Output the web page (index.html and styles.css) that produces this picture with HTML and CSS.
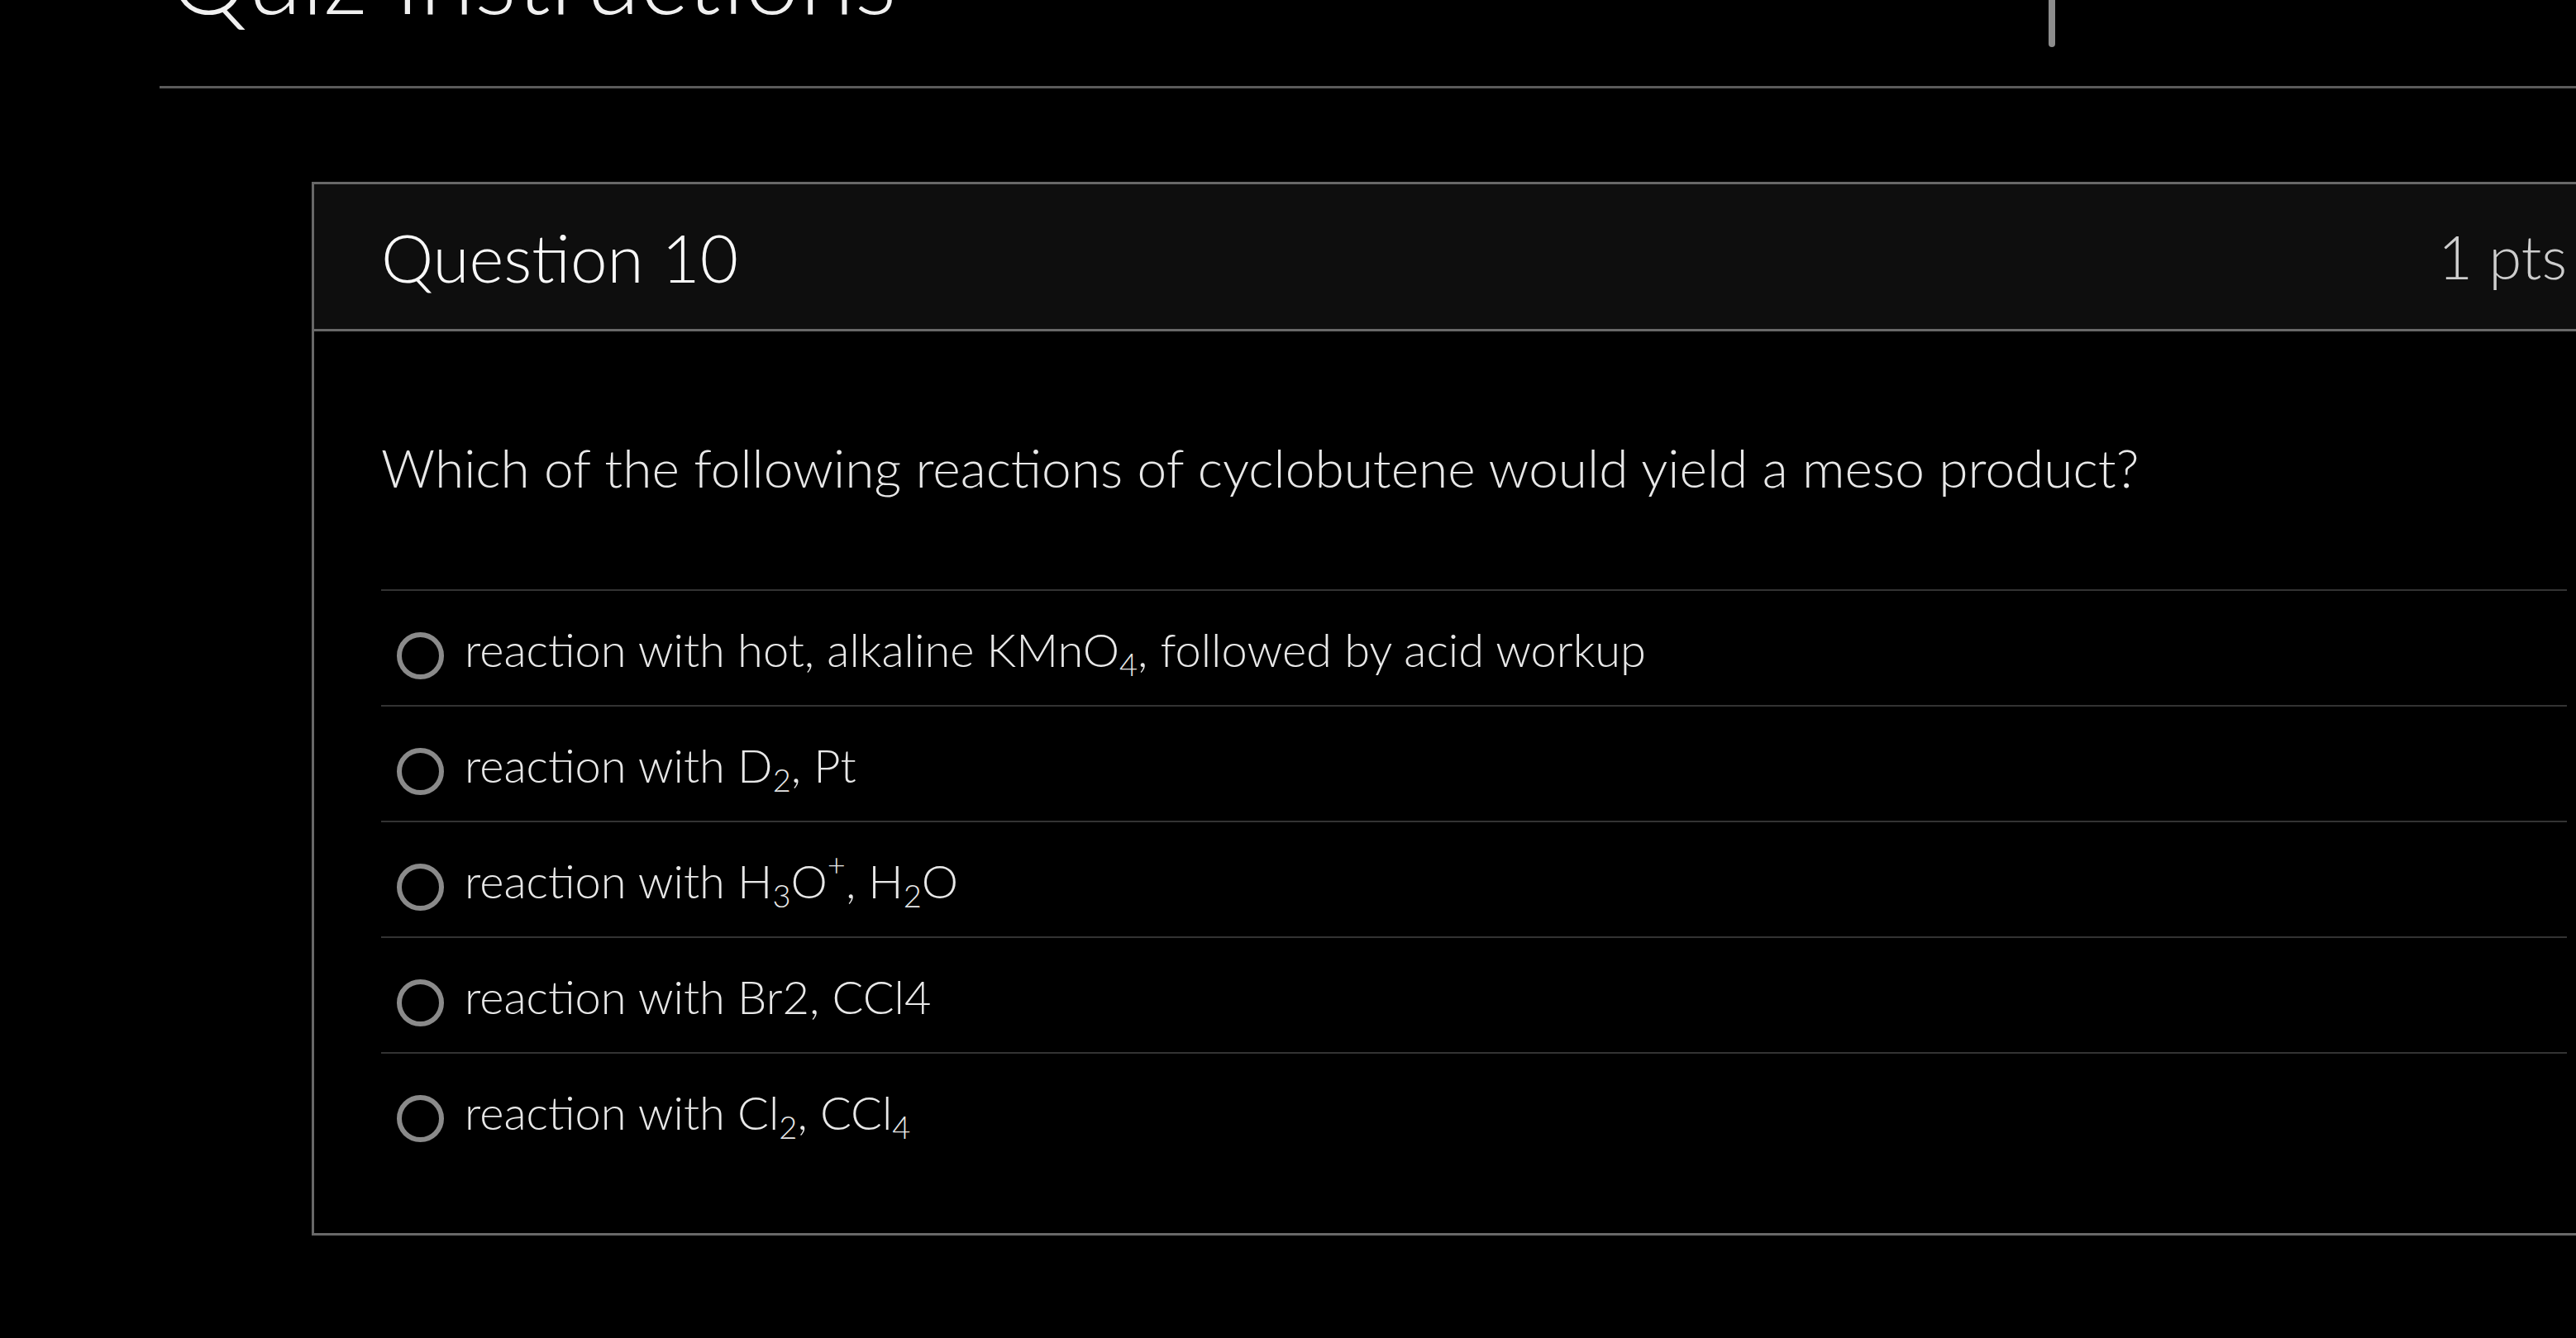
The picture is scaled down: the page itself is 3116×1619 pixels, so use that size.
FILE: index.html
```html
<!DOCTYPE html>
<html lang="en">
<head>
<meta charset="utf-8">
<title>Question 10</title>
<link rel="stylesheet" href="styles.css">
</head>
<body>
<div class="page">
  <header class="page-head">
    <h1 class="page-title">Quiz Instructions</h1>
    <span class="head-bar"></span>
  </header>

  <section class="card">
    <div class="card-head">
      <h2 class="q-title">Question 10</h2>
      <span class="q-pts">1 pts</span>
    </div>
    <div class="card-body">
      <p class="q-text">Which of the following reactions of cyclobutene would yield a meso product?</p>
      <ul class="answers">
        <li class="answer"><span class="radio"></span><span class="a-text">reaction with hot, alkaline KMnO<sub>4</sub>, followed by acid workup</span></li>
        <li class="answer"><span class="radio"></span><span class="a-text">reaction with D<sub>2</sub>, Pt</span></li>
        <li class="answer"><span class="radio"></span><span class="a-text">reaction with H<sub>3</sub>O<sup>+</sup>, H<sub>2</sub>O</span></li>
        <li class="answer"><span class="radio"></span><span class="a-text">reaction with Br2, CCl4</span></li>
        <li class="answer"><span class="radio"></span><span class="a-text">reaction with Cl<sub>2</sub>, CCl<sub>4</sub></span></li>
      </ul>
    </div>
  </section>
</div>
</body>
</html>
```
FILE: styles.css
```css
html, body {
  margin: 0;
  padding: 0;
  background: #000;
  overflow: hidden;
}

body {
  width: 3116px;
  height: 1619px;
  font-family: Lato, "Noto Sans", sans-serif;
  color: #e6e6e6;
}

.page {
  padding-left: 193px;
  width: 3300px;
}

.page-head {
  display: grid;
  grid-template-columns: 2285px 8px;
  align-items: start;
  border-bottom: 3px solid #5a5a5a;
  height: 104px;
}

.page-title {
  margin: -89px 0 0 12px;
  font-size: 120px;
  line-height: 1;
  font-weight: 300;
  color: #f0f0f0;
  white-space: nowrap;
}

.head-bar {
  width: 8px;
  height: 57px;
  background: #8c8c8c;
  border-radius: 0 0 4px 4px;
}

.card {
  margin: 113px 0 0 184px;
  width: 2806px;
  border: 3px solid #686868;
  background: #000;
}

.card-head {
  display: flex;
  justify-content: space-between;
  align-items: center;
  height: 175px;
  padding: 0 81px;
  background: #0e0e0e;
  border-bottom: 3px solid #686868;
}

.q-title {
  margin: 0;
  font-size: 80px;
  font-weight: 300;
  line-height: 1.2;
  color: #f8f8f8;
}

.q-pts {
  font-size: 72px;
  line-height: 1.2;
  color: #cdcdcd;
  font-weight: 300;
}

.card-body {
  padding: 120px 81px 79px 81px;
}

.q-text {
  margin: 0 0 102px 0;
  font-size: 64px;
  line-height: 90px;
  font-weight: 300;
  color: #e8e8e8;
}

.answers {
  list-style: none;
  margin: 0;
  padding: 0;
}

.answer {
  display: flex;
  align-items: center;
  gap: 25px;
  height: 134px;
  padding: 4px 0 0 19px;
  border-top: 2px solid #333;
}

.radio {
  flex: none;
  width: 45px;
  height: 45px;
  border: 6px solid #8a8a8a;
  border-radius: 50%;
  margin-top: 14px;
}

.a-text {
  font-size: 56px;
  line-height: 90px;
  font-weight: 300;
  color: #e8e8e8;
  white-space: nowrap;
}

sub, sup {
  font-size: 68%;
  line-height: 0;
  position: relative;
  vertical-align: baseline;
}

sub {
  bottom: -0.3em;
}

sup {
  top: -0.7em;
}
```
